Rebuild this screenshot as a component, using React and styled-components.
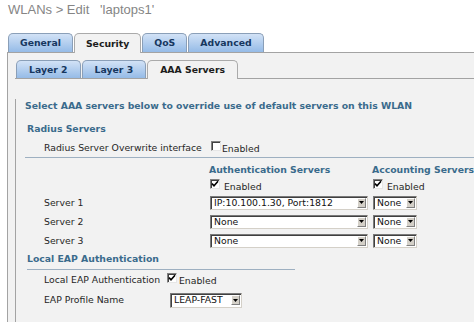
import styled, { createGlobalStyle } from 'styled-components';

const GlobalStyle = createGlobalStyle`
  html, body {
    margin: 0;
    padding: 0;
    background: #fff;
    overflow: hidden;
  }
  body {
    font-family: 'DejaVu Sans', Verdana, sans-serif;
    font-size: 9.3px;
    color: #262626;
  }
`;

const HEADING = '#3a6b8c';
const LINE = '#a3a3a3';

function App() {
  return (
    <Page>
      <GlobalStyle />
      <Title>{"WLANs > Edit   'laptops1'"}</Title>
      <Frame>
        <TabStrip $h={19}>
          <Tab $h={19} $pad={11}>General</Tab>
          <Tab $h={19} $pad={11} $active>Security</Tab>
          <Tab $h={19} $pad={11}>QoS</Tab>
          <Tab $h={19} $pad={11}>Advanced</Tab>
        </TabStrip>
        <OuterPanel>
          <TabStrip $h={18}>
            <Tab $h={18}>Layer 2</Tab>
            <Tab $h={18}>Layer 3</Tab>
            <Tab $h={18} $active>AAA Servers</Tab>
          </TabStrip>
          <InnerPanel>
            <Intro>Select AAA servers below to override use of default servers on this WLAN</Intro>

            <SectionHeading $mt={9}>Radius Servers</SectionHeading>
            <FormRow $cols="166px 1fr" $h={16} $mt={4}>
              <Label>Radius Server Overwrite interface</Label>
              <CheckField $gap={1} $ml={1}>
                <Checkbox />
                <EnabledText>Enabled</EnabledText>
              </CheckField>
            </FormRow>
            <Rule $mt={1} />

            <FormRow $cols="166px 163px 1fr" $h={14} $mt={5}>
              <span />
              <ColumnHeading>Authentication Servers</ColumnHeading>
              <ColumnHeading>Accounting Servers</ColumnHeading>
            </FormRow>
            <FormRow $cols="166px 163px 1fr" $h={15} $mt={1}>
              <span />
              <CheckField $gap={4}>
                <Checkbox checked />
                <EnabledText>Enabled</EnabledText>
              </CheckField>
              <CheckField $gap={4}>
                <Checkbox checked />
                <EnabledText>Enabled</EnabledText>
              </CheckField>
            </FormRow>
            {[
              ['Server 1', 'IP:10.100.1.30, Port:1812'],
              ['Server 2', 'None'],
              ['Server 3', 'None'],
            ].map(([name, value]) => (
              <FormRow key={name} $cols="166px 163px 1fr" $h={19}>
                <Label>{name}</Label>
                <Select width={158} value={value} />
                <Select width={44} value="None" />
              </FormRow>
            ))}

            <SectionHeading $mt={2}>Local EAP Authentication</SectionHeading>
            <Rule $mt={3} $ml={2} $w={268} />
            <FormRow $cols="123px 1fr" $h={16} $mt={2}>
              <Label>Local EAP Authentication</Label>
              <CheckField $gap={2}>
                <Checkbox checked />
                <EnabledText>Enabled</EnabledText>
              </CheckField>
            </FormRow>
            <FormRow $cols="123px 1fr" $h={20} $mt={2}>
              <Label>EAP Profile Name</Label>
              <Select width={72} value="LEAP-FAST" $ml={3} tall />
            </FormRow>
          </InnerPanel>
        </OuterPanel>
      </Frame>
    </Page>
  );
}

function Checkbox({ checked }) {
  return (
    <Box>
      {checked && (
        <svg width="8" height="8" viewBox="0 0 8 8">
          <path d="M1 3.6 L3 5.8 L7 1.2" fill="none" stroke="#000" strokeWidth="1.6" />
        </svg>
      )}
    </Box>
  );
}

function Select({ width, value, $ml, tall }) {
  return (
    <SelectBox $w={width} $ml={$ml} $tall={tall}>
      <SelectText>{value}</SelectText>
      <DropButton>
        <svg width="5" height="3" viewBox="0 0 5 3">
          <polygon points="0,0 5,0 2.5,3" fill="#000" />
        </svg>
      </DropButton>
    </SelectBox>
  );
}

export default App;

const Page = styled.div`
  width: 100%;
  height: 322px;
  overflow: hidden;
`;

const Title = styled.h1`
  margin: 0;
  padding: 2px 0 0 8px;
  height: 15px;
  font-family: 'Liberation Sans', Arial, sans-serif;
  font-size: 13px;
  font-weight: normal;
  line-height: 15px;
  color: #858585;
  white-space: pre;
`;

const Frame = styled.div`
  width: 573px;
  margin: 16px 0 0 7px;
`;

const TabStrip = styled.div`
  display: flex;
  align-items: flex-end;
  gap: 1px;
  height: ${(p) => p.$h}px;
  padding-left: 1px;
  border-bottom: 1px solid ${LINE};
`;

const Tab = styled.div`
  box-sizing: border-box;
  display: flex;
  align-items: center;
  height: ${(p) => (p.$active ? p.$h + 1 : p.$h)}px;
  margin-bottom: ${(p) => (p.$active ? -1 : 0)}px;
  padding: 0 ${(p) => p.$pad || 12}px;
  border: 1px solid ${(p) => (p.$active ? '#aaaaaa' : '#8a9fb8')};
  border-bottom: none;
  border-radius: 5px 5px 0 0;
  background: ${(p) => (p.$active ? '#f2f2f2' : 'linear-gradient(#d2e2f6, #95bbe7)')};
  color: ${(p) => (p.$active ? '#1c1c1c' : '#16375f')};
  font-weight: bold;
  line-height: 12px;
  white-space: nowrap;
`;

const OuterPanel = styled.div`
  height: 262px;
  padding: 7px 0 0 7px;
  background: #f2f2f2;
  border-left: 1px solid ${LINE};
`;

const InnerPanel = styled.div`
  height: 239px;
  padding-left: 9px;
  border-left: 1px solid ${LINE};
  border-bottom: 1px solid ${LINE};
`;

const Intro = styled.div`
  margin-top: 20px;
  line-height: 14px;
  font-weight: bold;
  color: ${HEADING};
  white-space: nowrap;
`;

const SectionHeading = styled.div`
  margin-top: ${(p) => p.$mt}px;
  padding-left: 2px;
  line-height: 14px;
  font-weight: bold;
  color: ${HEADING};
`;

const Rule = styled.div`
  height: 1px;
  margin-top: ${(p) => p.$mt}px;
  margin-left: ${(p) => p.$ml || 0}px;
  width: ${(p) => (p.$w ? `${p.$w}px` : 'auto')};
  background: #9eb0c1;
`;

const FormRow = styled.div`
  display: grid;
  grid-template-columns: ${(p) => p.$cols};
  align-items: center;
  height: ${(p) => p.$h}px;
  margin-top: ${(p) => p.$mt || 0}px;
  padding-left: 19px;
  white-space: nowrap;
`;

const Label = styled.span`
  line-height: 14px;
  color: #262626;
`;

const ColumnHeading = styled.span`
  margin-left: -1px;
  line-height: 14px;
  font-weight: bold;
  color: ${HEADING};
`;

const CheckField = styled.span`
  display: flex;
  align-items: flex-start;
  gap: ${(p) => p.$gap}px;
  margin-left: ${(p) => p.$ml || 0}px;
`;

const Box = styled.span`
  box-sizing: border-box;
  display: inline-flex;
  align-items: center;
  justify-content: center;
  flex: none;
  width: 10px;
  height: 10px;
  background: #fff;
  border: 1px solid;
  border-color: #808080 #e6e6e6 #e6e6e6 #808080;
  box-shadow: inset 1px 1px 0 #404040;
`;

const EnabledText = styled.span`
  margin-top: 2px;
  line-height: 12px;
  color: #262626;
`;

const SelectBox = styled.div`
  box-sizing: border-box;
  display: flex;
  align-items: center;
  width: ${(p) => p.$w}px;
  height: ${(p) => (p.$tall ? 15 : 14)}px;
  margin-left: ${(p) => p.$ml || 0}px;
  padding: 0 1px 0 3px;
  background: #fff;
  border: 1px solid;
  border-color: #7a7a7a #d4d0c8 #d4d0c8 #7a7a7a;
  box-shadow: inset 1px 1px 0 #404040;
`;

const SelectText = styled.span`
  flex: 1;
  overflow: hidden;
  line-height: 12px;
  color: #111;
`;

const DropButton = styled.span`
  box-sizing: border-box;
  display: flex;
  align-items: center;
  justify-content: center;
  flex: none;
  width: 9px;
  height: 10px;
  background: #d4d0c8;
  border: 1px solid;
  border-color: #fff #808080 #808080 #fff;
`;
